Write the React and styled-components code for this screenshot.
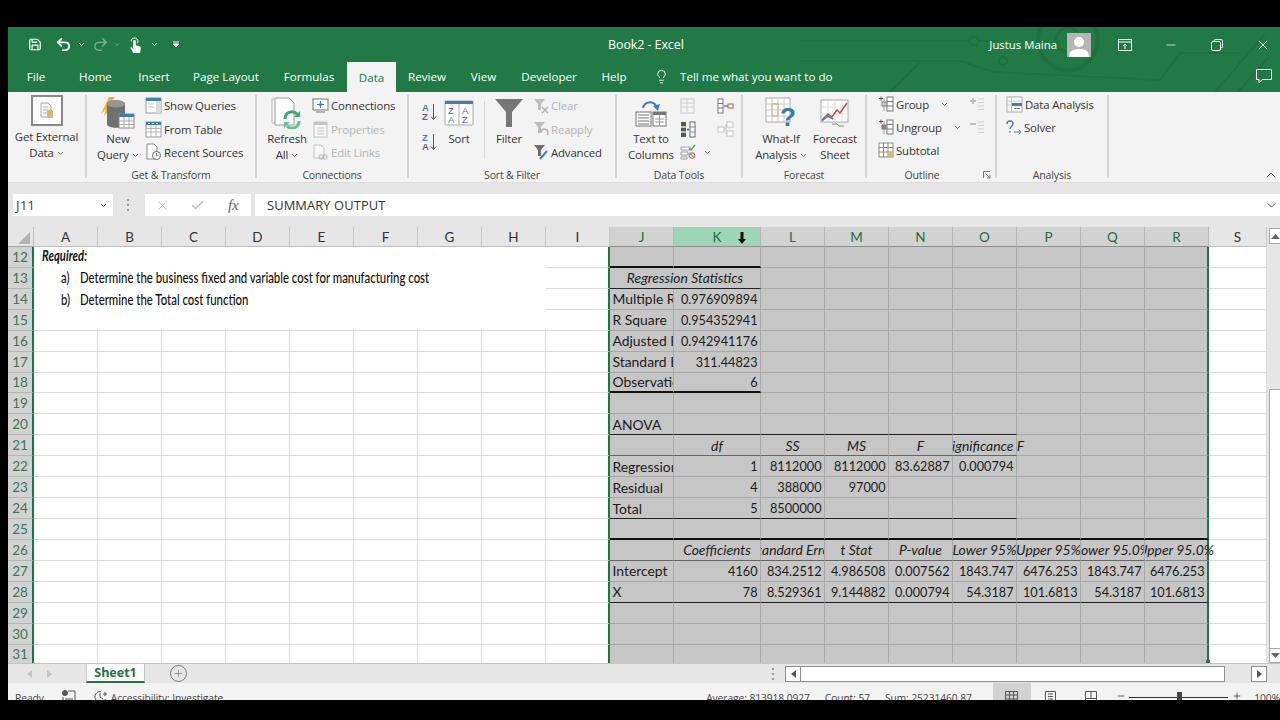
import React from 'react';
import styled, { createGlobalStyle } from 'styled-components';
import { Save, Undo2, Redo2, X, Minus, Check, ChevronDown, ChevronUp, Lightbulb, Plus } from 'lucide-react';

const GlobalStyle = createGlobalStyle`
  html, body { margin: 0; padding: 0; background: #000; }
  body { font-family: "Open Sans", "Liberation Sans", sans-serif; }
`;

const GREEN = '#217a46';
const UI = '"Open Sans", "Liberation Sans", sans-serif';
const CELL = 'Lato, "Liberation Sans", sans-serif';

const Screen = styled.div`
  width: 1280px;
  height: 720px;
  background: #000;
  overflow: hidden;
  padding: 27px 0 20px 8px;
  box-sizing: border-box;
`;
const Window = styled.div`
  height: 673px;
  display: flex;
  flex-direction: column;
  background: #f3f3f3;
  overflow: hidden;
`;
const GreenHead = styled.div`
  position: relative;
  flex: 0 0 65px;
  background: ${GREEN};
  color: #fff;
`;
const Circuit = styled.svg`
  position: absolute;
  left: 0;
  top: 0;
  pointer-events: none;
`;
const TitleRow = styled.div`
  position: relative;
  height: 35px;
  margin-right: -6px;
  display: flex;
  align-items: center;
`;
const Qat = styled.div`
  width: 590px;
  flex-shrink: 0;
  display: flex;
  align-items: center;
  padding-left: 20px;
  box-sizing: border-box;
`;
const QatSlot = styled.span`
  width: ${(p) => p.$w}px;
  margin-left: ${(p) => p.$ml || 0}px;
  flex-shrink: 0;
  display: flex;
  justify-content: center;
  align-items: center;
  opacity: ${(p) => (p.$dim ? 0.4 : 1)};
`;
const DocTitle = styled.div`
  margin-left: 10px;
  font-size: 12.5px;
  letter-spacing: -0.1px;
`;
const UserName = styled.div`
  margin-left: auto;
  font-size: 11.4px;
`;
const Avatar = styled.div`
  width: 24px;
  height: 24px;
  margin: 0 11px 0 10px;
  background: #b5b5b5;
  display: flex;
  align-items: flex-end;
  justify-content: center;
  overflow: hidden;
`;
const WinButton = styled.span`
  width: 46px;
  display: flex;
  justify-content: center;
  align-items: center;
`;
const TabRow = styled.div`
  position: relative;
  height: 30px;
  display: flex;
  align-items: stretch;
  font-size: 11.6px;
  padding-bottom: 1px;
  box-sizing: border-box;
`;
const Tab = styled.div`
  width: ${(p) => p.$w}px;
  margin-bottom: ${(p) => (p.$active ? -1 : 0)}px;
  display: flex;
  align-items: center;
  justify-content: center;
  background: ${(p) => (p.$active ? '#f3f3f3' : 'transparent')};
  color: ${(p) => (p.$active ? '#217346' : '#fff')};
`;
const TellMe = styled.div`
  display: flex;
  align-items: center;
  gap: 11px;
  margin-left: 15px;
`;
const CommentBtn = styled.div`
  margin-left: auto;
  margin-right: 8px;
  display: flex;
  align-items: center;
`;

const Ribbon = styled.div`
  flex: 0 0 90px;
  height: 90px;
  display: flex;
  background: #f3f3f3;
  color: #333;
  font-size: 11.4px;
  font-family: ${UI};
  letter-spacing: -0.15px;
  box-sizing: border-box;
`;
const Group = styled.div`
  position: relative;
  width: ${(p) => p.$w}px;
  height: 83px;
  margin-top: 3px;
  border-right: 2px solid #d4d4d4;
  box-sizing: border-box;
`;
const GroupBody = styled.div`
  height: 73px;
  display: flex;
  padding-left: ${(p) => p.$pl || 0}px;
`;
const GroupLabel = styled.div`
  height: 14px;
  line-height: 14px;
  padding-right: ${(p) => p.$pr || 0}px;
  text-align: center;
  font-size: 10.5px;
  color: #444;
`;
const Launcher = styled.span`
  position: absolute;
  right: 4px;
  bottom: -1px;
  display: flex;
`;
const BigButton = styled.div`
  width: ${(p) => p.$w}px;
  margin-left: ${(p) => p.$ml || 0}px;
  display: flex;
  flex-direction: column;
  align-items: center;
`;
const BigIcon = styled.div`
  height: ${(p) => p.$h || 36}px;
  padding-bottom: ${(p) => p.$pb || 0}px;
  box-sizing: border-box;
  display: flex;
  align-items: center;
  justify-content: center;
`;
const BigLabel = styled.div`
  line-height: 16px;
  text-align: center;
  white-space: nowrap;
`;
const Stack = styled.div`
  width: ${(p) => (p.$w ? `${p.$w}px` : 'auto')};
  margin-left: ${(p) => p.$ml || 0}px;
  margin-top: ${(p) => p.$mt || 0}px;
  display: flex;
  flex-direction: column;
`;
const SmallRow = styled.div`
  height: ${(p) => p.$h || 23.4}px;
  margin-top: ${(p) => p.$mt || 0}px;
  display: flex;
  align-items: center;
  gap: 2px;
  white-space: nowrap;
  color: ${(p) => (p.$off ? '#b4b4b4' : '#333')};
`;
const Chev = styled.span`
  display: inline-flex;
  margin-left: ${(p) => p.$ml || 3}px;
  vertical-align: middle;
`;
const ThinSep = styled.div`
  width: 1px;
  height: 58px;
  margin: 6px 0 0 ${(p) => p.$ml}px;
  background: #d9d9d9;
`;
const Collapse = styled.div`
  margin-left: auto;
  align-self: flex-end;
  padding-right: 1px;
  height: 15px;
  color: #444;
`;

const FormulaRow = styled.div`
  flex: 0 0 45px;
  display: flex;
  align-items: center;
  background: #e6e6e6;
  border-top: 1px solid #dcdcdc;
  box-sizing: border-box;
  font-family: ${UI};
  font-size: 12px;
  color: #444;
`;
const NameBox = styled.div`
  width: 100px;
  height: 22px;
  margin-left: 5px;
  padding: 0 6px 0 3px;
  background: #fff;
  display: flex;
  align-items: center;
  justify-content: space-between;
  box-sizing: border-box;
  font-size: 13.5px;
`;
const Grip = styled.div`
  width: 2px;
  height: 12px;
  margin: 0 16px 0 14px;
  background-image: radial-gradient(circle at 1px 1px, #9a9a9a 1px, transparent 1px);
  background-size: 2px 5px;
`;
const FxButtons = styled.div`
  width: 106px;
  height: 22px;
  background: #fff;
  display: flex;
  align-items: center;
  color: #b5b5b5;
`;
const FxSlot = styled.span`
  flex: 1;
  display: flex;
  justify-content: center;
`;
const FxText = styled.span`
  font-family: "Liberation Serif", serif;
  font-style: italic;
  font-size: 15px;
  color: #666;
`;
const FormulaInput = styled.div`
  flex: 1;
  height: 22px;
  margin-left: 4px;
  padding: 0 2px 0 12px;
  background: #fff;
  display: flex;
  align-items: center;
  justify-content: space-between;
  font-size: 12.9px;
  letter-spacing: 0.1px;
  color: #333;
`;

const SheetArea = styled.div`
  flex: 0 0 436px;
  display: flex;
  overflow: hidden;
  background: #e6e6e6;
`;
const Grid = styled.div`
  position: relative;
  display: grid;
  grid-template-columns: 26px repeat(9, 64px) 64px 87px repeat(7, 64px) 58px;
  grid-template-rows: 20px repeat(20, 20.93px);
  width: 1259px;
  background: #fff;
  font-family: ${CELL};
  font-size: 12.7px;
  color: #1c1c1c;
`;
const Corner = styled.div`
  background: #e6e6e6;
  border-right: 1px solid #bdbdbd;
  border-bottom: 1px solid #a8a8a8;
  display: flex;
  align-items: flex-end;
  justify-content: flex-end;
  padding: 0 3px 2px 0;
  box-sizing: border-box;
`;
const ColHead = styled.div`
  position: relative;
  display: flex;
  align-items: center;
  justify-content: center;
  box-sizing: border-box;
  padding-top: 1px;
  font-size: 13.5px;
  background: ${(p) => (p.$current ? '#9fd5b7' : p.$active ? '#d2d2d2' : '#e6e6e6')};
  color: ${(p) => (p.$active ? '#1d6e42' : '#333')};
  border-right: 1px solid ${(p) => (p.$active ? '#b5b5b5' : '#c8c8c8')};
  border-bottom: 1px solid ${(p) => (p.$active ? '#8f8f8f' : '#bdbdbd')};
`;
const CursorMark = styled.svg`
  position: absolute;
  left: 64px;
  top: 5px;
`;
const RowHead = styled.div`
  display: flex;
  align-items: center;
  justify-content: center;
  box-sizing: border-box;
  font-size: 13.5px;
  background: #d2d2d2;
  color: #3f7558;
  border-right: 2px solid #217346;
  border-bottom: 1px solid #b5b5b5;
`;
const borderFor = (kind, sel) => {
  if (kind === 'thick') return '2px solid #111';
  if (kind === 'thin') return '1.5px solid #222';
  if (kind === 'gray') return '1.5px solid #666';
  return `1px solid ${sel ? '#a9a9a9' : '#dcdcdc'}`;
};
const Cell = styled.div`
  display: flex;
  align-items: center;
  min-width: 0;
  white-space: nowrap;
  box-sizing: border-box;
  padding: 0 2.5px;
  overflow: ${(p) => (p.$spill ? 'visible' : 'hidden')};
  ${(p) => (p.$spill ? 'clip-path: inset(0 -30px 0 0); z-index: 1;' : '')}
  grid-column: span ${(p) => p.$span || 1};
  justify-content: ${(p) => (p.$align === 'right' ? 'flex-end' : p.$align === 'center' ? 'center' : 'flex-start')};
  font-style: ${(p) => (p.$italic ? 'italic' : 'normal')};
  font-size: ${(p) => (p.$align === 'right' ? 12.7 : 13.9)}px;
  background: ${(p) => (p.$sel ? '#c6c6c6' : '#fff')};
  border-bottom: ${(p) => borderFor(p.$bottom, p.$sel)};
  border-right: ${(p) => (p.$edge ? '2px solid #217346' : borderFor(null, p.$sel))};
`;
const CellText = styled.span`
  flex-shrink: 0;
`;
const TextBox = styled.div`
  position: absolute;
  left: 26px;
  top: 20px;
  width: 512px;
  height: 82px;
  background: #fff;
  padding: 0 0 0 8px;
  box-sizing: border-box;
  overflow: hidden;
  font-family: Lato, sans-serif;
  color: #111;
  z-index: 2;
`;
const BoxLine = styled.div`
  height: 22px;
  line-height: 22px;
  margin-top: ${(p) => p.$mt || 0}px;
  padding-left: ${(p) => p.$pl || 0}px;
  font-size: 14.5px;
  white-space: nowrap;
  display: flex;
  font-weight: ${(p) => (p.$bold ? 700 : 500)};
  font-style: ${(p) => (p.$bold ? 'italic' : 'normal')};
`;
const Narrow = styled.span`
  display: inline-block;
  transform: scaleX(${(p) => p.$x});
  transform-origin: left center;
  width: ${(p) => p.$w}px;
`;
const Handle = styled.div`
  position: absolute;
  right: 57px;
  bottom: 0;
  width: 4px;
  height: 3px;
  background: #217346;
  z-index: 2;
`;
const VScroll = styled.div`
  width: 13px;
  padding-left: 2px;
  box-sizing: border-box;
  display: flex;
  flex-direction: column;
`;
const ScrollBtn = styled.div`
  height: ${(p) => p.$h}px;
  margin-top: ${(p) => p.$mt || 0}px;
  background: #fff;
  border: 1px solid #a8a8a8;
  border-right: none;
  box-sizing: border-box;
  display: flex;
  align-items: center;
  justify-content: center;
`;
const VTrack = styled.div`
  flex: 0 0 145px;
`;
const VThumb = styled.div`
  flex: 1;
  background: #fff;
  border-top: 1px solid #a8a8a8;
  border-left: 1px solid #a8a8a8;
`;

const SheetTabs = styled.div`
  flex: 0 0 19px;
  display: flex;
  align-items: center;
  background: #e6e6e6;
  border-top: 1px solid #c4c4c4;
  box-sizing: border-box;
  font-family: ${UI};
`;
const NavArrows = styled.div`
  width: 78px;
  display: flex;
  gap: 15px;
  padding-left: 19px;
  box-sizing: border-box;
`;
const SheetTab = styled.div`
  width: 59px;
  height: 19px;
  background: #fff;
  border-bottom: 2px solid #217346;
  border-left: 1px solid #c4c4c4;
  border-right: 1px solid #c4c4c4;
  box-sizing: border-box;
  display: flex;
  align-items: center;
  justify-content: center;
  font-size: 12.5px;
  font-weight: 700;
  color: #217346;
`;
const AddSheet = styled.div`
  width: 15px;
  height: 15px;
  margin-left: 25px;
  border: 1px solid #777;
  border-radius: 50%;
  color: #666;
  display: flex;
  align-items: center;
  justify-content: center;
`;
const TabGrip = styled(Grip)`
  margin: 0 11px 0 585px;
`;
const HScroll = styled.div`
  width: 482px;
  height: 16px;
  display: flex;
  align-items: stretch;
`;
const HBtn = styled.div`
  width: 16px;
  background: #fff;
  border: 1px solid #8f8f8f;
  box-sizing: border-box;
  display: flex;
  align-items: center;
  justify-content: center;
`;
const HThumb = styled.div`
  width: 424px;
  background: #fff;
  border: 1px solid #8f8f8f;
  border-left: none;
  box-sizing: border-box;
`;
const HTrack = styled.div`
  flex: 1;
`;
const StatusBar = styled.div`
  flex: 0 0 18px;
  display: flex;
  background: #f3f3f3;
  font-family: ${UI};
  font-size: 10.2px;
  letter-spacing: -0.05px;
  color: #444;
  overflow: hidden;
`;
const StatusItem = styled.div`
  padding-top: ${(p) => (p.$pt === undefined ? 8 : p.$pt)}px;
  margin-left: ${(p) => p.$ml || 0}px;
  white-space: nowrap;
  display: flex;
  gap: 3px;
`;
const ViewBtn = styled.div`
  width: 38px;
  height: 18px;
  margin-left: ${(p) => p.$ml || 0}px;
  display: flex;
  justify-content: center;
  padding-top: 8px;
  box-sizing: border-box;
  background: ${(p) => (p.$on ? '#d2d2d2' : 'transparent')};
`;
const Zoomer = styled.div`
  position: relative;
  width: 100px;
  height: 18px;
  margin-left: 3px;
  &::before {
    content: '';
    position: absolute;
    left: 0;
    right: 0;
    top: 14px;
    height: 1px;
    background: #333;
  }
`;
const ZoomKnob = styled.div`
  position: absolute;
  left: 48px;
  top: 9px;
  width: 5px;
  height: 9px;
  background: #444;
`;

const Mini = ({ w = 7, color = '#666' }) => (
  <svg width={w} height="5" viewBox="0 0 7 5"><path d="M1 1l2.5 2.5L6 1" fill="none" stroke={color} strokeWidth="1" /></svg>
);

const TouchIcon = () => (
  <svg width="14" height="18" viewBox="0 0 14 18" fill="#fff">
    <path d="M3 5.500a3.500 3.500 0 1 1 6.500 1.800" fill="none" stroke="#fff" />
    <path d="M5.200 5.300a1.300 1.300 0 0 1 2.600 0v4l4 1.200c.8.300 1.200.8 1 1.800L12 17H5.500L2.600 12.600c-.6-1 .5-1.800 1.300-1.100l1.300 1.200z" />
  </svg>
);
const TableIcon = ({ head = '#3f7fb5', dashed }) => (
  <svg width="17" height="17" viewBox="0 0 17 17">
    <rect x="1" y="1" width="15" height="15" fill="#fff" stroke="#9a9a9a" />
    <rect x="1" y="1" width="15" height="3" fill={head} />
    {dashed && <path d="M3 2.5h2M7 2.5h2M11 2.5h2" stroke="#fff" />}
    <path d="M1 7.5h15M1 11h15M6 4v12M11 4v12" stroke="#b5b5b5" />
  </svg>
);
const ShowQueriesIcon = () => (
  <svg width="17" height="17" viewBox="0 0 17 17">
    <rect x="1" y="1" width="15" height="15" fill="#fff" stroke="#9a9a9a" />
    <rect x="1" y="1" width="15" height="3" fill="#3f7fb5" />
    <rect x="11" y="4" width="5" height="12" fill="#dcdcdc" />
    <path d="M3 7h6M3 10h6" stroke="#c9c9c9" />
  </svg>
);
const RecentIcon = () => (
  <svg width="17" height="18" viewBox="0 0 17 18">
    <path d="M2 1h7l3 3v12H2z" fill="#fff" stroke="#8a8a8a" />
    <circle cx="11.5" cy="12.5" r="4" fill="#fff" stroke="#666" />
    <path d="M11.5 10v2.7h2" fill="none" stroke="#3f7fb5" />
  </svg>
);
const ExternalIcon = () => (
  <svg width="32" height="31" viewBox="0 0 32 31">
    <rect x="1" y="1" width="30" height="29" fill="#fff" stroke="#8a8a8a" strokeWidth="2" />
    <path d="M10 8h7l3 3v11H10z" fill="#f4f4f4" stroke="#a8a8a8" />
    <path d="M12 12h5M12 15h5M12 18h4" stroke="#b8b8b8" />
    <rect x="16" y="15" width="6" height="8" rx="1" fill="#d8b77a" />
  </svg>
);
const NewQueryIcon = () => (
  <svg width="38" height="34" viewBox="0 0 38 34">
    <path d="M2 18L10 1h6l-6 8h5L5 20l2-7z" fill="#e8b23a" />
    <path d="M8 8c0-5 18-5 18 0v20c0 5-18 5-18 0z" fill="#707070" />
    <ellipse cx="17" cy="8" rx="9" ry="3.5" fill="#959595" />
    <rect x="20" y="18" width="15" height="14" fill="#fff" stroke="#8a8a8a" />
    <rect x="20" y="18" width="15" height="3" fill="#3f7fb5" />
    <path d="M20 25h15M20 28.5h15M25 21v11M30 21v11" stroke="#a8a8a8" />
  </svg>
);
const RefreshIcon = () => (
  <svg width="32" height="32" viewBox="0 0 32 32">
    <path d="M1 2h14v24H1z" fill="#f8f8f8" stroke="#b5b5b5" />
    <path d="M4 1h14l5 5v22H4z" fill="#fff" stroke="#9a9a9a" />
    <path d="M14 22a7 7 0 0 1 12-5" fill="none" stroke="#3fa573" strokeWidth="3" />
    <path d="M29 14v6h-6z" fill="#3fa573" />
    <path d="M28 24a7 7 0 0 1-12 5" fill="none" stroke="#6dbb94" strokeWidth="3" />
    <path d="M13 31v-6h6z" fill="#6dbb94" />
  </svg>
);
const ConnectionsIcon = () => (
  <svg width="17" height="16" viewBox="0 0 17 16">
    <rect x="1" y="1" width="15" height="11" fill="#fff" stroke="#777" />
    <path d="M4 14h9" stroke="#777" />
    <path d="M8.5 3v7M5 6.5h7" stroke="#3f7fb5" />
    <circle cx="8.5" cy="6.5" r="1.5" fill="#3f7fb5" />
  </svg>
);
const PropsIcon = () => (
  <svg width="17" height="17" viewBox="0 0 17 17">
    <rect x="2" y="1" width="13" height="15" fill="#f7f7f7" stroke="#c4c4c4" />
    <rect x="2" y="1" width="13" height="3" fill="#c4c4c4" />
    <path d="M5 7h7M5 10h7M5 13h7" stroke="#c4c4c4" />
  </svg>
);
const EditLinksIcon = () => (
  <svg width="17" height="17" viewBox="0 0 17 17">
    <path d="M2 1h7l3 3v10H2z" fill="#f7f7f7" stroke="#c4c4c4" />
    <circle cx="9" cy="13" r="2.2" fill="none" stroke="#b0b0b0" />
    <circle cx="13" cy="13" r="2.2" fill="none" stroke="#b0b0b0" />
  </svg>
);
const SortSmall = ({ top, bottom }) => (
  <svg width="15" height="20" viewBox="0 0 15 20">
    <text x="0" y="9" fontSize="9.5" fontWeight="700" fontFamily="Liberation Sans" fill="#3f7fb5">{top}</text>
    <text x="0" y="18" fontSize="9.5" fontWeight="700" fontFamily="Liberation Sans" fill="#7b4f9d">{bottom}</text>
    <path d="M11.5 2v15M9 14.5l2.5 3 2.5-3" fill="none" stroke="#555" />
  </svg>
);
const SortBig = () => (
  <svg width="30" height="26" viewBox="0 0 30 26">
    <rect x="1" y="1" width="28" height="24" rx="1" fill="#fff" stroke="#a8a8a8" />
    <rect x="1" y="1" width="28" height="3" fill="#3f7fb5" />
    <path d="M15 4v21" stroke="#a8a8a8" />
    <text x="4" y="14" fontSize="9.5" fontFamily="Liberation Sans" fill="#7b4f9d">Z</text>
    <text x="4" y="23" fontSize="9.5" fontFamily="Liberation Sans" fill="#3f7fb5">A</text>
    <text x="18" y="14" fontSize="9.5" fontFamily="Liberation Sans" fill="#3f7fb5">A</text>
    <text x="18" y="23" fontSize="9.5" fontFamily="Liberation Sans" fill="#7b4f9d">Z</text>
  </svg>
);
const FilterBig = () => (
  <svg width="28" height="28" viewBox="0 0 28 28">
    <path d="M0 0h28L17 13v15h-6V13z" fill="#767676" />
  </svg>
);
const FunnelSmall = ({ color = '#bdbdbd', children }) => (
  <svg width="16" height="16" viewBox="0 0 16 16">
    <path d="M1 1h11L8 6v6H5V6z" fill={color} />
    {children}
  </svg>
);
const TextColsIcon = () => (
  <svg width="32" height="28" viewBox="0 0 32 28">
    <path d="M8 9a7 7 0 0 1 13-2" fill="none" stroke="#3f7fb5" strokeWidth="2" />
    <path d="M25 5l-2 7-5-5z" fill="#3f7fb5" />
    <rect x="1" y="13" width="15" height="14" fill="#fff" stroke="#777" />
    <path d="M3 16h11M3 19h11M3 22h11M3 25h11" stroke="#777" />
    <rect x="18" y="13" width="13" height="14" fill="#fff" stroke="#777" />
    <rect x="18" y="13" width="13" height="3" fill="#777" />
    <path d="M24.5 16v11M20 20h9M20 23h9" stroke="#999" />
  </svg>
);
const FlashFill = () => (
  <svg width="16" height="16" viewBox="0 0 16 16">
    <rect x="1" y="1" width="13" height="14" fill="#f5f5f5" stroke="#c8c8c8" />
    <path d="M1 5h13M1 9h13M7 1v14" stroke="#d0d0d0" />
  </svg>
);
const RemoveDup = () => (
  <svg width="16" height="17" viewBox="0 0 16 17">
    <rect x="1" y="1" width="5" height="15" fill="#4a5a68" />
    <rect x="10" y="1" width="5" height="15" fill="#fff" stroke="#666" />
    <path d="M1 6h5M1 11h5" stroke="#d9c36a" strokeWidth="2" />
    <path d="M10 6h5M10 11h5" stroke="#888" />
    <path d="M7 8.5h2" stroke="#3f7fb5" strokeWidth="2" />
  </svg>
);
const Validate = () => (
  <svg width="16" height="16" viewBox="0 0 16 16">
    <path d="M1 3h9v3H1zM1 8h7v3H1zM1 13h6v2H1z" fill="#fff" stroke="#888" strokeWidth="0.8" />
    <path d="M9 4l2 2 4-5" fill="none" stroke="#3fa573" strokeWidth="1.3" />
    <circle cx="12" cy="11.5" r="2.8" fill="#fff" stroke="#c0504d" />
    <path d="M10 9.5l4 4" stroke="#c0504d" />
  </svg>
);
const Consolidate = () => (
  <svg width="17" height="16" viewBox="0 0 17 16">
    <rect x="1" y="1" width="5" height="14" fill="#fff" stroke="#777" />
    <path d="M1 5.500h5M1 10h5" stroke="#777" />
    <path d="M7 8h4" stroke="#3f7fb5" strokeWidth="1.3" />
    <rect x="11" y="6" width="5" height="4" fill="#fff" stroke="#c0504d" />
  </svg>
);
const Relations = () => (
  <svg width="17" height="16" viewBox="0 0 17 16">
    <rect x="1" y="6" width="6" height="5" fill="#fff" stroke="#c4c4c4" />
    <rect x="10" y="1" width="6" height="5" fill="#fff" stroke="#c4c4c4" />
    <rect x="10" y="10" width="6" height="5" fill="#fff" stroke="#c4c4c4" />
    <path d="M7 8h2M9 3.500v9h1M9 3.500h1" stroke="#c4c4c4" fill="none" />
  </svg>
);
const WhatIfIcon = () => (
  <svg width="32" height="32" viewBox="0 0 32 32">
    <rect x="1" y="1" width="24" height="24" fill="#fff" stroke="#aaa" />
    <path d="M7 1v24M13 1v24M19 1v24M1 7h24M1 13h24M1 19h24" stroke="#c8c8c8" />
    <path d="M7 7h6v12H7z" fill="none" stroke="#e0a860" />
    <text x="15" y="29" fontSize="26" fontWeight="700" fontFamily="Liberation Sans" fill="#2f7fb5">?</text>
  </svg>
);
const ForecastIcon = () => (
  <svg width="30" height="28" viewBox="0 0 30 28">
    <rect x="1" y="1" width="27" height="22" fill="#fff" stroke="#aaa" />
    <path d="M1 8h27M1 15h27M8 1v22M15 1v22M22 1v22" stroke="#dcdcdc" />
    <path d="M2 21l6-6 4 3 5-7 3 3 7-10" fill="none" stroke="#c0504d" strokeWidth="1.5" />
    <path d="M2 22l6-5 5 3" fill="none" stroke="#3f7fb5" strokeWidth="1.5" />
    <path d="M12 25h5l2 2h5" fill="none" stroke="#888" />
  </svg>
);
const GroupIcon = ({ red }) => (
  <svg width="16" height="16" viewBox="0 0 16 16">
    <path d="M1 2.500h4M3 .5v4" stroke="#555" />
    <rect x="4" y="6" width="4" height="4" fill={red ? '#d9534f' : '#fff'} stroke="#777" />
    <rect x="9" y="1" width="6" height="14" fill="#fff" stroke="#777" />
    <path d="M9 5.500h6M9 10h6" stroke="#777" />
    <path d="M6 2v13" stroke="#999" />
  </svg>
);
const SubtotalIcon = () => (
  <svg width="16" height="16" viewBox="0 0 16 16">
    <rect x="1" y="1" width="14" height="14" fill="#fff" stroke="#888" />
    <path d="M5.500 1v14M10 1v14M1 5.500h14M1 10h14" stroke="#888" />
    <rect x="10" y="10" width="5" height="5" fill="#d8b77a" />
  </svg>
);
const DetailIcon = ({ plus }) => (
  <svg width="16" height="15" viewBox="0 0 16 15">
    <path d="M9 2h6M9 5.500h6M9 9h6M9 12.500h6" stroke="#cfcfcf" />
    <path d="M1 4h6" stroke="#bdbdbd" strokeWidth="2" />
    {plus && <path d="M4 1v6" stroke="#bdbdbd" strokeWidth="2" />}
  </svg>
);
const DataAnalysisIcon = () => (
  <svg width="17" height="17" viewBox="0 0 17 17">
    <rect x="1" y="1" width="15" height="15" fill="#fff" stroke="#aaa" />
    <path d="M1 5h15M1 9h15M5.500 1v15" stroke="#c8c8c8" />
    <rect x="6" y="7" width="10" height="3" fill="#3f7fb5" />
    <path d="M8 12.500h6" stroke="#888" />
  </svg>
);
const SolverIcon = () => (
  <svg width="16" height="16" viewBox="0 0 16 16">
    <path d="M1 4c0-4 6-4 6 0 0 2-3 2.500-3 5M4 11v1.500" fill="none" stroke="#3f7fb5" strokeWidth="1.4" />
    <path d="M8 12h7M12.500 9.500L15 12l-2.500 2.500" fill="none" stroke="#3f7fb5" />
  </svg>
);

const columns = ['A', 'B', 'C', 'D', 'E', 'F', 'G', 'H', 'I', 'J', 'K', 'L', 'M', 'N', 'O', 'P', 'Q', 'R', 'S'];
const selected = ['J', 'K', 'L', 'M', 'N', 'O', 'P', 'Q', 'R'];
const rows = Array.from({ length: 20 }, (_, i) => i + 12);

const filled = (row, start, values, extra = {}) => {
  const out = {};
  values.forEach((v, i) => {
    if (v !== '') out[`${columns[columns.indexOf(start) + i]}${row}`] = { text: v, ...extra };
  });
  return out;
};
const cells = {
  J13: { text: 'Regression Statistics', italic: true, align: 'center', span: 2 },
  J14: { text: 'Multiple R' }, K14: { text: '0.976909894', align: 'right' },
  J15: { text: 'R Square' }, K15: { text: '0.954352941', align: 'right' },
  J16: { text: 'Adjusted R Square' }, K16: { text: '0.942941176', align: 'right' },
  J17: { text: 'Standard Error' }, K17: { text: '311.44823', align: 'right' },
  J18: { text: 'Observations' }, K18: { text: '6', align: 'right' },
  J20: { text: 'ANOVA' },
  ...filled(21, 'K', ['df', 'SS', 'MS', 'F'], { italic: true, align: 'center' }),
  O21: { text: 'Significance F', italic: true, align: 'center', spill: true },
  J22: { text: 'Regression' },
  ...filled(22, 'K', ['1', '8112000', '8112000', '83.62887', '0.000794'], { align: 'right' }),
  J23: { text: 'Residual' },
  ...filled(23, 'K', ['4', '388000', '97000'], { align: 'right' }),
  J24: { text: 'Total' },
  ...filled(24, 'K', ['5', '8500000'], { align: 'right' }),
  ...filled(26, 'K', ['Coefficients', 'Standard Error', 't Stat', 'P-value', 'Lower 95%', 'Upper 95%', 'Lower 95.0%'], { italic: true, align: 'center' }),
  R26: { text: 'Upper 95.0%', italic: true, align: 'center', spill: true },
  J27: { text: 'Intercept' },
  ...filled(27, 'K', ['4160', '834.2512', '4.986508', '0.007562', '1843.747', '6476.253', '1843.747', '6476.253'], { align: 'right' }),
  J28: { text: 'X' },
  ...filled(28, 'K', ['78', '8.529361', '9.144882', '0.000794', '54.3187', '101.6813', '54.3187', '101.6813'], { align: 'right' }),
};

const within = (col, from, to) => columns.indexOf(col) >= columns.indexOf(from) && columns.indexOf(col) <= columns.indexOf(to);
const bottomOf = (col, row) => {
  if (row === 12 && within(col, 'J', 'K')) return 'thick';
  if (row === 13 && within(col, 'J', 'K')) return 'thin';
  if (row === 18 && within(col, 'J', 'K')) return 'thick';
  if (row === 20 && within(col, 'J', 'O')) return 'thin';
  if (row === 21 && within(col, 'J', 'O')) return 'gray';
  if (row === 24 && within(col, 'J', 'O')) return 'thin';
  if (row === 25 && within(col, 'J', 'R')) return 'thick';
  if (row === 26 && within(col, 'J', 'R')) return 'gray';
  if (row === 28 && within(col, 'J', 'R')) return 'thin';
  return null;
};

const tabs = [
  ['File', 56], ['Home', 63], ['Insert', 54], ['Page Layout', 90], ['Formulas', 76], ['Data', 49],
  ['Review', 62], ['View', 51], ['Developer', 80], ['Help', 50],
];

const SheetGrid = () => (
  <Grid>
    <Corner>
      <svg width="12" height="12" viewBox="0 0 12 12"><path d="M12 0v12H0z" fill="#b5b5b5" /></svg>
    </Corner>
    {columns.map((c) => (
      <ColHead key={c} $active={selected.includes(c)} $current={c === 'K'}>
        {c}
        {c === 'K' && (
          <CursorMark width="8" height="12" viewBox="0 0 8 12">
            <path d="M2.500 0h3v7H8l-4 5-4-5h2.500z" fill="#111" />
          </CursorMark>
        )}
      </ColHead>
    ))}
    {rows.map((r) => (
      <React.Fragment key={r}>
        <RowHead>{r}</RowHead>
        {columns.map((c) => {
          if (c === 'K' && r === 13) return null;
          const data = cells[`${c}${r}`] || {};
          return (
            <Cell
              key={c}
              $sel={selected.includes(c)}
              $bottom={bottomOf(c, r)}
              $edge={c === 'I' || c === 'R'}
              $align={data.align}
              $italic={data.italic}
              $span={data.span}
              $spill={data.spill}
            >
              {data.text && <CellText>{data.text}</CellText>}
            </Cell>
          );
        })}
      </React.Fragment>
    ))}
    <TextBox>
      <BoxLine $bold $mt={-2}><Narrow $x={0.78} $w={60}>Required:</Narrow></BoxLine>
      <BoxLine $pl={19}>
        <Narrow $x={0.78} $w={19}>a)</Narrow>
        <Narrow $x={0.785} $w={360}>Determine the business fixed and variable cost for manufacturing cost</Narrow>
      </BoxLine>
      <BoxLine $pl={19}>
        <Narrow $x={0.78} $w={19}>b)</Narrow>
        <Narrow $x={0.785} $w={170}>Determine the Total cost function</Narrow>
      </BoxLine>
    </TextBox>
    <Handle />
  </Grid>
);

const App = () => (
  <>
    <GlobalStyle />
    <Screen>
      <Window>
        <GreenHead>
          <Circuit width="1272" height="65" viewBox="8 27 1272 65" fill="none" stroke="#1e7040" strokeWidth="2">
            <path d="M800 41h170M979 41h20M800 61h160l33 11 167 8 20-27h60" />
            <circle cx="974" cy="41" r="4.5" />
            <circle cx="1003" cy="61" r="4" />
            <circle cx="1068" cy="40" r="30" strokeWidth="4" />
            <circle cx="1068" cy="40" r="12" strokeWidth="3" />
            <path d="M1215 92l50-58M1238 92l30-34M890 92l30-30" />
          </Circuit>
          <TitleRow>
            <Qat>
              <QatSlot $w={14}><Save size={15} strokeWidth={2} /></QatSlot>
              <QatSlot $w={28} $ml={7}><Undo2 size={17} strokeWidth={2.6} /></QatSlot>
              <QatSlot $w={9}><Mini color="#fff" /></QatSlot>
              <QatSlot $w={28} $dim><Redo2 size={17} strokeWidth={2} /></QatSlot>
              <QatSlot $w={6} $dim><Mini color="#fff" /></QatSlot>
              <QatSlot $w={30}><TouchIcon /></QatSlot>
              <QatSlot $w={8}><Mini color="#fff" /></QatSlot>
              <QatSlot $w={36}>
                <svg width="8" height="7" viewBox="0 0 8 7"><path d="M1 1h6M1 3l3 3 3-3z" fill="#fff" stroke="#fff" /></svg>
              </QatSlot>
            </Qat>
            <DocTitle>Book2  -  Excel</DocTitle>
            <UserName>Justus Maina</UserName>
            <Avatar>
              <svg width="22" height="22" viewBox="0 0 22 22" fill="#fff">
                <circle cx="11" cy="7" r="5" />
                <path d="M1 22c0-6 4-8 10-8s10 2 10 8z" />
              </svg>
            </Avatar>
            <WinButton>
              <svg width="14" height="12" viewBox="0 0 14 12" fill="none" stroke="#fff">
                <rect x="0.5" y="0.5" width="13" height="11" />
                <path d="M0 3h14M7 10V5M5 7l2-2 2 2" />
              </svg>
            </WinButton>
            <WinButton><Minus size={14} strokeWidth={1.2} /></WinButton>
            <WinButton>
              <svg width="12" height="12" viewBox="0 0 12 12" fill="none" stroke="#fff">
                <rect x="0.5" y="2.500" width="9" height="9" rx="1.5" />
                <path d="M3 2.500V2a1.500 1.500 0 0 1 1.500-1.500H10A1.500 1.500 0 0 1 11.500 2v5.500A1.500 1.500 0 0 1 10 9h-.5" />
              </svg>
            </WinButton>
            <WinButton><X size={16} strokeWidth={1.2} /></WinButton>
          </TitleRow>
          <TabRow>
            {tabs.map(([name, w]) => (
              <Tab key={name} $w={w} $active={name === 'Data'}>{name}</Tab>
            ))}
            <TellMe>
              <Lightbulb size={15} strokeWidth={1.4} />
              Tell me what you want to do
            </TellMe>
            <CommentBtn>
              <svg width="16" height="15" viewBox="0 0 16 15" fill="none" stroke="#fff">
                <path d="M.5.5h15v10H6l-3 3.500v-3.500H.5z" />
              </svg>
            </CommentBtn>
          </TabRow>
        </GreenHead>

        <Ribbon>
          <Group $w={79}>
            <GroupBody>
              <BigButton $w={77}>
                <BigIcon $h={34} $pb={3}><ExternalIcon /></BigIcon>
                <BigLabel>Get External</BigLabel>
                <BigLabel>Data<Chev><Mini /></Chev></BigLabel>
              </BigButton>
            </GroupBody>
          </Group>
          <Group $w={170}>
            <GroupBody $pl={10}>
              <BigButton $w={42}>
                <BigIcon><NewQueryIcon /></BigIcon>
                <BigLabel>New</BigLabel>
                <BigLabel>Query<Chev><Mini /></Chev></BigLabel>
              </BigButton>
              <Stack $ml={6} $mt={-1}>
                <SmallRow><ShowQueriesIcon />Show Queries</SmallRow>
                <SmallRow><TableIcon dashed />From Table</SmallRow>
                <SmallRow><RecentIcon />Recent Sources</SmallRow>
              </Stack>
            </GroupBody>
            <GroupLabel>Get &amp; Transform</GroupLabel>
          </Group>
          <Group $w={152}>
            <GroupBody $pl={5}>
              <BigButton $w={50}>
                <BigIcon><RefreshIcon /></BigIcon>
                <BigLabel>Refresh</BigLabel>
                <BigLabel>All<Chev><Mini /></Chev></BigLabel>
              </BigButton>
              <Stack $mt={-1}>
                <SmallRow><ConnectionsIcon />Connections</SmallRow>
                <SmallRow $off><PropsIcon />Properties</SmallRow>
                <SmallRow $off><EditLinksIcon />Edit Links</SmallRow>
              </Stack>
            </GroupBody>
            <GroupLabel>Connections</GroupLabel>
          </Group>
          <Group $w={208}>
            <GroupBody $pl={13}>
              <Stack $w={15}>
                <SmallRow $h={30} $mt={2}><SortSmall top="A" bottom="Z" /></SmallRow>
                <SmallRow $h={30}><SortSmall top="Z" bottom="A" /></SmallRow>
              </Stack>
              <BigButton $w={30} $ml={7}>
                <BigIcon><SortBig /></BigIcon>
                <BigLabel>Sort</BigLabel>
              </BigButton>
              <ThinSep $ml={10} />
              <BigButton $w={36} $ml={6}>
                <BigIcon><FilterBig /></BigIcon>
                <BigLabel>Filter</BigLabel>
              </BigButton>
              <Stack $ml={6} $mt={-1}>
                <SmallRow $off>
                  <FunnelSmall><path d="M9 9l6 6M15 9l-6 6" stroke="#b0b0b0" strokeWidth="1.3" /></FunnelSmall>Clear
                </SmallRow>
                <SmallRow $off>
                  <FunnelSmall><path d="M8 12a3.500 3.500 0 1 1 6 2" fill="none" stroke="#b0b0b0" strokeWidth="1.5" /></FunnelSmall>Reapply
                </SmallRow>
                <SmallRow>
                  <FunnelSmall color="#6f6f6f"><path d="M7 15l7-8" stroke="#3f7fb5" strokeWidth="2" /></FunnelSmall>Advanced
                </SmallRow>
              </Stack>
            </GroupBody>
            <GroupLabel>Sort &amp; Filter</GroupLabel>
          </Group>
          <Group $w={126}>
            <GroupBody $pl={5}>
              <BigButton $w={58}>
                <BigIcon><TextColsIcon /></BigIcon>
                <BigLabel>Text to</BigLabel>
                <BigLabel>Columns</BigLabel>
              </BigButton>
              <Stack $w={37} $mt={-1}>
                <SmallRow><FlashFill /></SmallRow>
                <SmallRow><RemoveDup /></SmallRow>
                <SmallRow><Validate /><Chev $ml={6}><Mini /></Chev></SmallRow>
              </Stack>
              <Stack $mt={-1}>
                <SmallRow><Consolidate /></SmallRow>
                <SmallRow><Relations /></SmallRow>
              </Stack>
            </GroupBody>
            <GroupLabel>Data Tools</GroupLabel>
          </Group>
          <Group $w={124}>
            <GroupBody $pl={7}>
              <BigButton $w={62}>
                <BigIcon><WhatIfIcon /></BigIcon>
                <BigLabel>What-If</BigLabel>
                <BigLabel>Analysis<Chev><Mini /></Chev></BigLabel>
              </BigButton>
              <BigButton $w={46}>
                <BigIcon><ForecastIcon /></BigIcon>
                <BigLabel>Forecast</BigLabel>
                <BigLabel>Sheet</BigLabel>
              </BigButton>
            </GroupBody>
            <GroupLabel>Forecast</GroupLabel>
          </Group>
          <Group $w={130}>
            <GroupBody $pl={11}>
              <Stack $w={91} $mt={-2.5}>
                <SmallRow $h={23}><GroupIcon />Group<Chev $ml={10}><Mini /></Chev></SmallRow>
                <SmallRow $h={23}><GroupIcon red />Ungroup<Chev $ml={10}><Mini /></Chev></SmallRow>
                <SmallRow $h={23}><SubtotalIcon />Subtotal</SmallRow>
              </Stack>
              <Stack $mt={-2.5}>
                <SmallRow $h={23}><DetailIcon plus /></SmallRow>
                <SmallRow $h={23}><DetailIcon /></SmallRow>
              </Stack>
            </GroupBody>
            <GroupLabel $pr={18}>Outline</GroupLabel>
            <Launcher>
              <svg width="8" height="8" viewBox="0 0 8 8" fill="none" stroke="#777">
                <path d="M.5 7V.5H7M2.500 2.500L7 7M7 4v3H4" />
              </svg>
            </Launcher>
          </Group>
          <Group $w={112}>
            <GroupBody $pl={9}>
              <Stack $mt={-2}>
                <SmallRow $h={23}><DataAnalysisIcon />Data Analysis</SmallRow>
                <SmallRow $h={23}><SolverIcon />Solver</SmallRow>
              </Stack>
            </GroupBody>
            <GroupLabel>Analysis</GroupLabel>
          </Group>
          <Collapse><ChevronUp size={16} strokeWidth={1.2} /></Collapse>
        </Ribbon>

        <FormulaRow>
          <NameBox>J11<Mini /></NameBox>
          <Grip />
          <FxButtons>
            <FxSlot><X size={15} strokeWidth={1.4} /></FxSlot>
            <FxSlot><Check size={15} strokeWidth={1.8} /></FxSlot>
            <FxSlot><FxText>fx</FxText></FxSlot>
          </FxButtons>
          <FormulaInput>
            SUMMARY OUTPUT
            <ChevronDown size={13} strokeWidth={1.5} />
          </FormulaInput>
        </FormulaRow>

        <SheetArea>
          <SheetGrid />
          <VScroll>
            <ScrollBtn $h={16} $mt={1}>
              <svg width="9" height="5" viewBox="0 0 9 5"><path d="M4.500 0L9 5H0z" fill="#666" /></svg>
            </ScrollBtn>
            <VTrack />
            <VThumb />
            <ScrollBtn $h={15}>
              <svg width="9" height="5" viewBox="0 0 9 5"><path d="M0 0h9L4.500 5z" fill="#666" /></svg>
            </ScrollBtn>
          </VScroll>
        </SheetArea>

        <SheetTabs>
          <NavArrows>
            <svg width="5" height="8" viewBox="0 0 5 8"><path d="M5 0v8L0 4z" fill="#c4c4c4" /></svg>
            <svg width="5" height="8" viewBox="0 0 5 8"><path d="M0 0v8l5-4z" fill="#c4c4c4" /></svg>
          </NavArrows>
          <SheetTab>Sheet1</SheetTab>
          <AddSheet><Plus size={11} strokeWidth={1.3} /></AddSheet>
          <TabGrip />
          <HScroll>
            <HBtn><svg width="5" height="8" viewBox="0 0 5 8"><path d="M5 0v8L0 4z" fill="#555" /></svg></HBtn>
            <HThumb />
            <HTrack />
            <HBtn><svg width="5" height="8" viewBox="0 0 5 8"><path d="M0 0v8l5-4z" fill="#555" /></svg></HBtn>
          </HScroll>
        </SheetTabs>

        <StatusBar>
          <StatusItem $ml={7}>Ready</StatusItem>
          <StatusItem $ml={18} $pt={7}>
            <svg width="14" height="14" viewBox="0 0 14 14" fill="none" stroke="#555">
              <circle cx="3" cy="3" r="2.500" fill="#555" />
              <path d="M6 1h7v12H1V7M3 9h8M3 11h8" />
            </svg>
          </StatusItem>
          <StatusItem $ml={17} $pt={7}>
            <svg width="14" height="14" viewBox="0 0 14 14" fill="none" stroke="#555">
              <path d="M8 1.500A5.500 5.500 0 1 0 12.500 9M7 3v4l3 2M10 4h4M12 2v4" />
            </svg>
          </StatusItem>
          <StatusItem $ml={4}>Accessibility: Investigate</StatusItem>
          <StatusItem $ml={483}>Average: 813918.0927</StatusItem>
          <StatusItem $ml={15}>Count: 57</StatusItem>
          <StatusItem $ml={15}>Sum: 25231460.87</StatusItem>
          <ViewBtn $on $ml={21}>
            <svg width="13" height="12" viewBox="0 0 13 12" fill="none" stroke="#555"><path d="M.5.5h12v11H.5zM4.500.5v11M8.500.5v11M.5 4h12M.5 8h12" /></svg>
          </ViewBtn>
          <ViewBtn $ml={1}>
            <svg width="11" height="13" viewBox="0 0 11 13" fill="none" stroke="#555"><path d="M.5.5h10v12H.5zM3 3h5M3 5.500h5M3 8h5" /></svg>
          </ViewBtn>
          <ViewBtn $ml={2}>
            <svg width="12" height="12" viewBox="0 0 12 12" fill="none" stroke="#555"><path d="M.5.5h11v11H.5zM6 .5v7M.5 7.500h11" /></svg>
          </ViewBtn>
          <StatusItem $ml={6} $pt={8}><Minus size={10} /></StatusItem>
          <Zoomer><ZoomKnob /></Zoomer>
          <StatusItem $ml={4} $pt={8}><Plus size={10} /></StatusItem>
          <StatusItem $ml={12}>100%</StatusItem>
        </StatusBar>
      </Window>
    </Screen>
  </>
);

export default App;
